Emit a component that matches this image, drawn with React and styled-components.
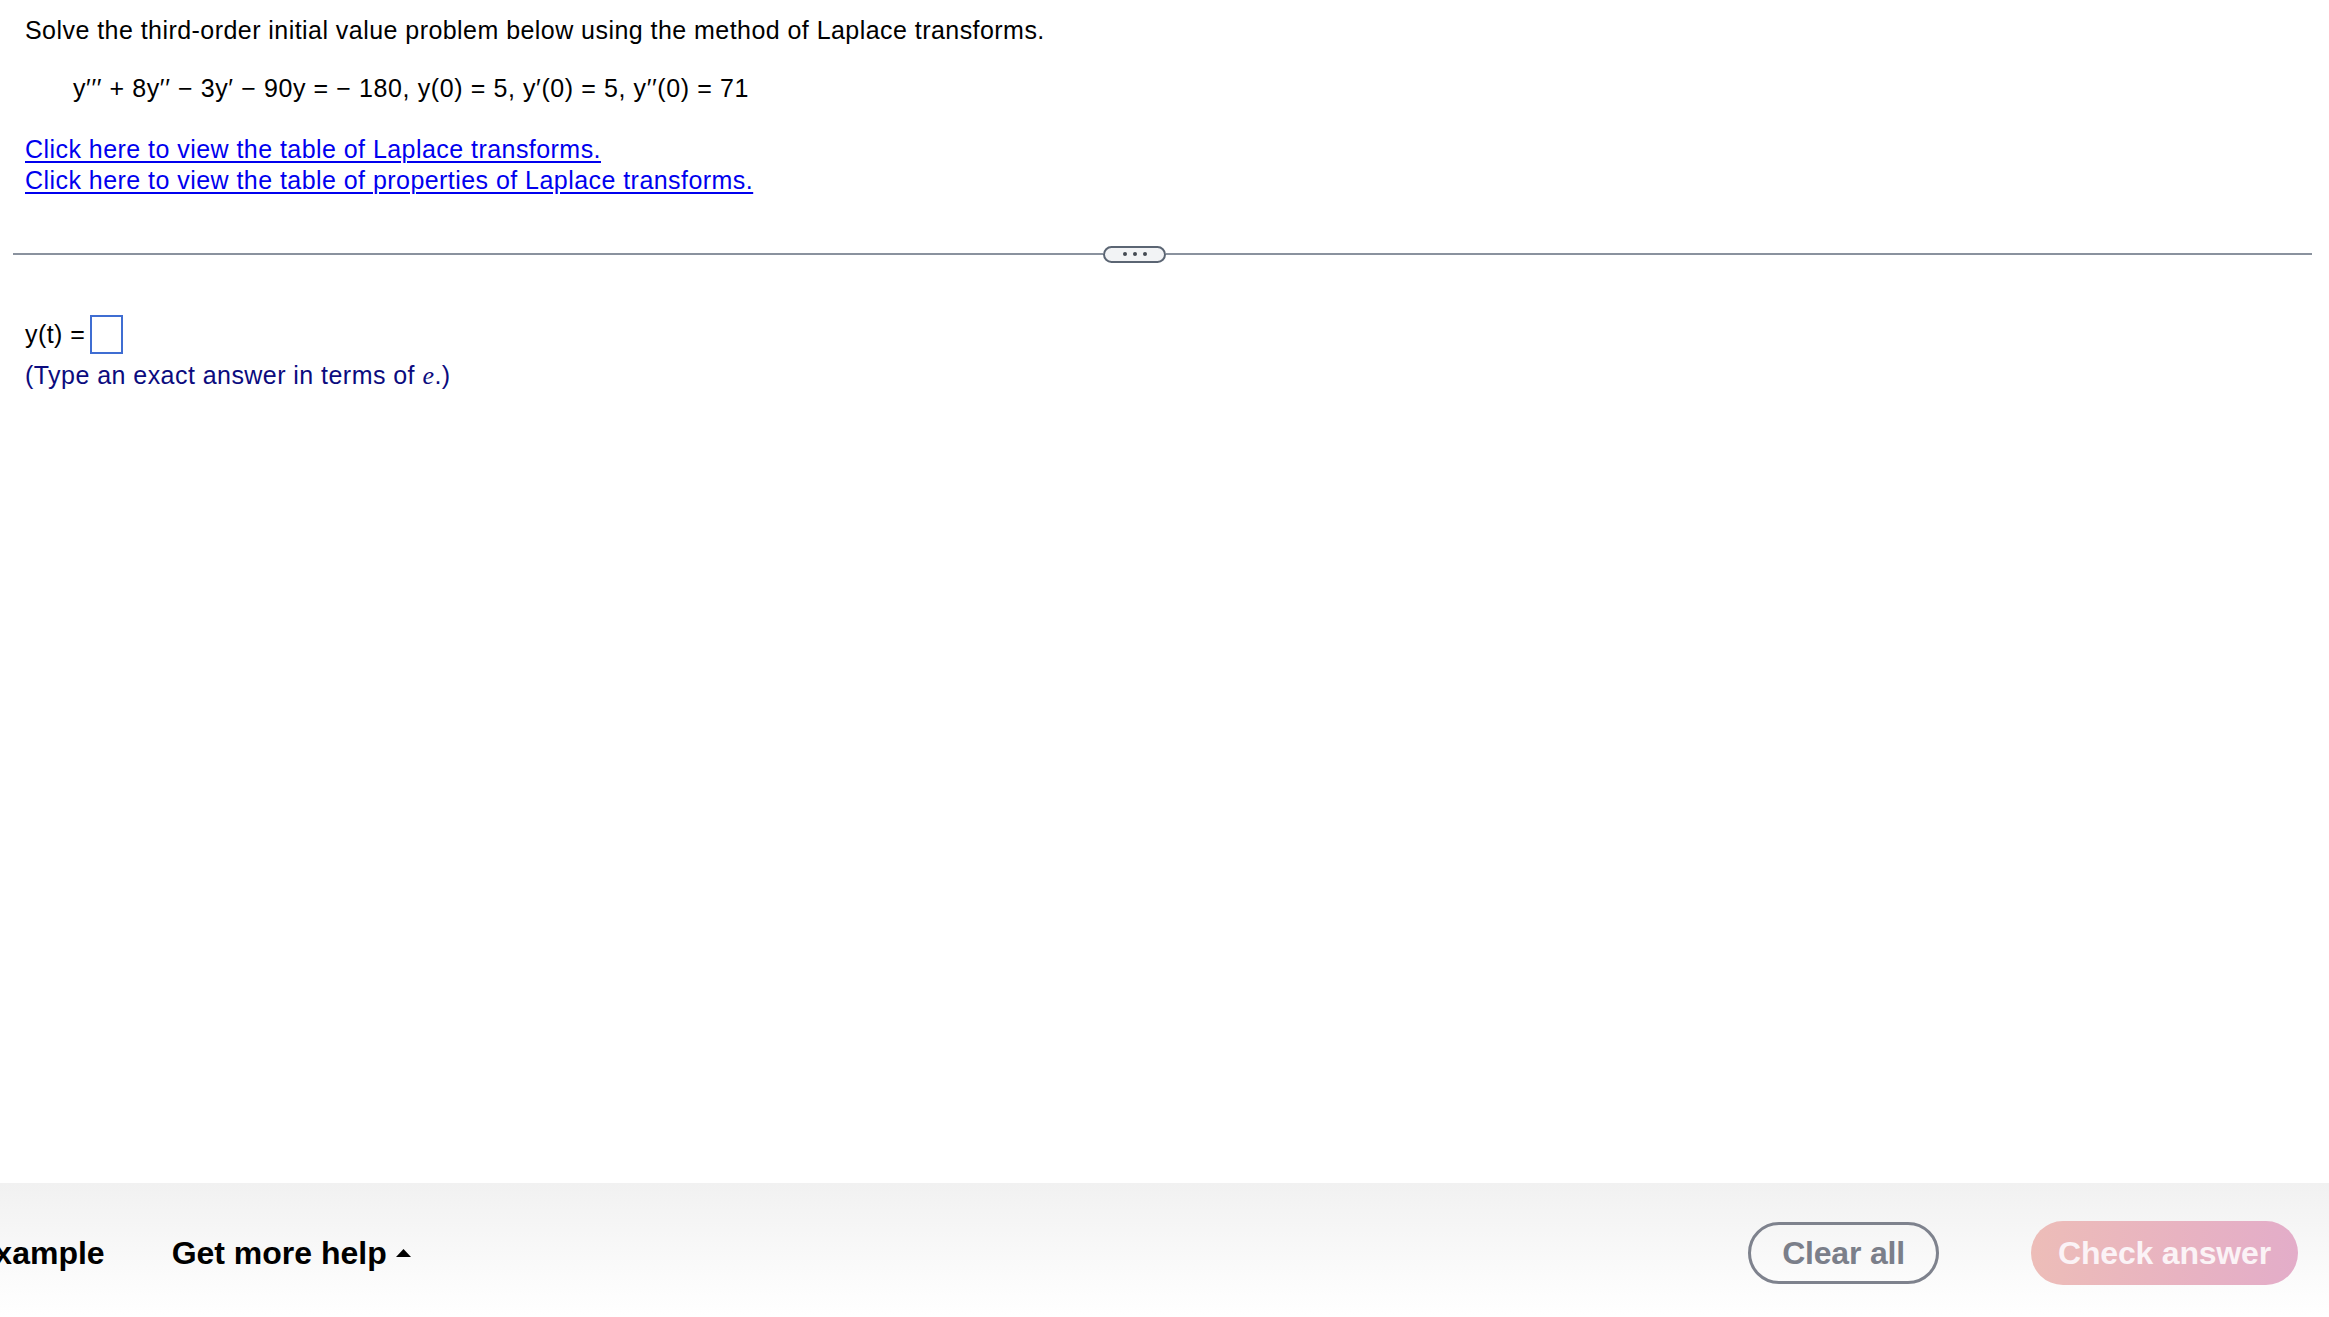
import React from 'react'
import styled, { createGlobalStyle } from 'styled-components'

const GlobalStyle = createGlobalStyle`
	html, body {
		margin: 0;
		padding: 0;
		background: #fff;
	}
	body {
		font-family: "Liberation Sans", Arial, sans-serif;
		color: #000;
	}
`

const Page = styled.div`
	display: flex;
	flex-direction: column;
	min-height: 100vh;
`

const Main = styled.main`
	flex: 1;
	padding: 14px 17px 0 13px;
`

const Question = styled.section`
	padding-left: 12px;
	font-size: 25px;
	letter-spacing: 0.45px;
`

const Prompt = styled.p`
	margin: 0;
	line-height: 32px;
`

const Equation = styled.p`
	margin: 26px 0 0 48px;
	line-height: 32px;
	white-space: pre;
	letter-spacing: 0.6px;
`

const Links = styled.div`
	margin-top: 30px;
	display: flex;
	flex-direction: column;
	align-items: flex-start;
`

const Link = styled.a`
	color: #0000ee;
	text-decoration: underline;
	text-underline-offset: 3px;
	text-decoration-thickness: 2px;
	line-height: 31px;
	cursor: pointer;
`

const Divider = styled.div`
	margin-top: 50px;
	display: flex;
	align-items: center;
	height: 16px;
`

const Rule = styled.div`
	height: 2px;
	background: #8a929e;
	flex: ${p => (p.$left ? '0 0 1090px' : '1')};
`

const MoreButton = styled.button`
	box-sizing: border-box;
	width: 63px;
	height: 17px;
	padding: 0;
	border: 2px solid #5b6573;
	border-radius: 9px;
	background: #f2f3f5;
	display: flex;
	align-items: center;
	justify-content: center;
	gap: 6px;
`

const Dot = styled.span`
	width: 4px;
	height: 4px;
	border-radius: 50%;
	background: #444a52;
`

const Answer = styled.section`
	margin-top: 53px;
	padding-left: 12px;
	font-size: 25px;
	letter-spacing: 0.45px;
`

const AnswerRow = styled.div`
	display: flex;
	align-items: center;
	height: 39px;
	gap: 5px;
`

const InputBox = styled.span`
	box-sizing: border-box;
	display: inline-block;
	width: 33px;
	height: 39px;
	border: 2px solid #3f6dd2;
	background: #fff;
`

const Hint = styled.p`
	margin: 6px 0 0;
	line-height: 31px;
	color: #0b0b7e;
`

const E = styled.i`
	font-family: "Liberation Serif", "Times New Roman", serif;
	font-size: 26px;
`

const Footer = styled.footer`
	box-sizing: border-box;
	height: 134px;
	display: flex;
	align-items: center;
	justify-content: space-between;
	padding: 6px 31px 0 0;
	background: linear-gradient(180deg, #f1f1f1 0%, #fbfbfb 70%, #fff 100%);
	overflow: hidden;
`

const FooterGroup = styled.div`
	display: flex;
	align-items: center;
	gap: ${p => p.$gap};
`

const HelpItem = styled.span`
	display: flex;
	align-items: center;
	gap: 9px;
	font-size: 32px;
	font-weight: bold;
	color: #000;
	margin-left: ${p => p.$offset || '0'};
	white-space: nowrap;
`

const PillButton = styled.button`
	box-sizing: border-box;
	height: ${p => (p.$primary ? '64px' : '62px')};
	width: ${p => (p.$primary ? '267px' : '191px')};
	border-radius: 32px;
	font-family: "Liberation Sans", Arial, sans-serif;
	font-size: 32px;
	font-weight: bold;
	letter-spacing: -0.2px;
	padding: 0;
	border: ${p => (p.$primary ? 'none' : '3px solid #7e828d')};
	color: ${p => (p.$primary ? '#fbf3f6' : '#7b7f8a')};
	background: ${p =>
		p.$primary ? 'linear-gradient(90deg, #edbdb8 0%, #e8b3c1 55%, #e3adc9 100%)' : 'transparent'};
`

const Caret = () => (
	<svg width="15" height="8" viewBox="0 0 15 8">
		<polygon points="7.5,0 15,8 0,8" fill="#000" />
	</svg>
)

const App = () => {
	return (
		<Page>
			<GlobalStyle />
			<Main>
				<Question>
					<Prompt>Solve the third-order initial value problem below using the method of Laplace transforms.</Prompt>
					<Equation>{'y\u2032\u2032\u2032 + 8y\u2032\u2032 \u2212 3y\u2032 \u2212 90y = \u2212 180, y(0) = 5, y\u2032(0) = 5, y\u2032\u2032(0) = 71'}</Equation>
					<Links>
						<Link>Click here to view the table of Laplace transforms.</Link>
						<Link>Click here to view the table of properties of Laplace transforms.</Link>
					</Links>
				</Question>
				<Divider>
					<Rule $left />
					<MoreButton aria-label="more">
						<Dot />
						<Dot />
						<Dot />
					</MoreButton>
					<Rule />
				</Divider>
				<Answer>
					<AnswerRow>
						<span>y(t) =</span>
						<InputBox />
					</AnswerRow>
					<Hint>
						(Type an exact answer in terms of <E>e</E>.)
					</Hint>
				</Answer>
			</Main>
			<Footer>
				<FooterGroup $gap="67px">
					<HelpItem $offset="-27px">Example</HelpItem>
					<HelpItem>
						Get more help
						<Caret />
					</HelpItem>
				</FooterGroup>
				<FooterGroup $gap="92px">
					<PillButton>Clear all</PillButton>
					<PillButton $primary>Check answer</PillButton>
				</FooterGroup>
			</Footer>
		</Page>
	)
}

export default App
